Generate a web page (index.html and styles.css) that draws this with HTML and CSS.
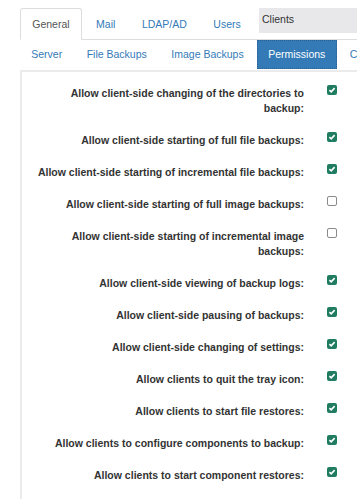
FILE: index.html
```html
<html>
  <head>
    <link rel="stylesheet" href="styles.css">
  </head>
  <body>
    <div class="page">
      <div class="tabs">
        <a class="tab active" href="#">General</a>
        <a class="tab" href="#">Mail</a>
        <a class="tab" href="#">LDAP/AD</a>
        <a class="tab" href="#">Users</a>
        <div class="clients">Clients</div>
      </div>
      <div class="subtabs">
        <a class="subtab" href="#">Server</a>
        <a class="subtab" href="#">File Backups</a>
        <a class="subtab" href="#">Image Backups</a>
        <a class="subtab active" href="#">Permissions</a>
        <a class="subtab" href="#">Client</a>
      </div>
      <div class="panel">
        <div class="row">
          <label class="label">Allow client-side changing of the directories to backup:</label>
          <span class="check on"><svg width="10" height="10" viewBox="0 0 10 10"><polyline points="2.4,5.1 4.2,6.9 7.6,3.1" /></svg></span>
        </div>
        <div class="row">
          <label class="label">Allow client-side starting of full file backups:</label>
          <span class="check on"><svg width="10" height="10" viewBox="0 0 10 10"><polyline points="2.4,5.1 4.2,6.9 7.6,3.1" /></svg></span>
        </div>
        <div class="row">
          <label class="label">Allow client-side starting of incremental file backups:</label>
          <span class="check on"><svg width="10" height="10" viewBox="0 0 10 10"><polyline points="2.4,5.1 4.2,6.9 7.6,3.1" /></svg></span>
        </div>
        <div class="row">
          <label class="label">Allow client-side starting of full image backups:</label>
          <span class="check"></span>
        </div>
        <div class="row">
          <label class="label">Allow client-side starting of incremental image backups:</label>
          <span class="check"></span>
        </div>
        <div class="row">
          <label class="label">Allow client-side viewing of backup logs:</label>
          <span class="check on"><svg width="10" height="10" viewBox="0 0 10 10"><polyline points="2.4,5.1 4.2,6.9 7.6,3.1" /></svg></span>
        </div>
        <div class="row">
          <label class="label">Allow client-side pausing of backups:</label>
          <span class="check on"><svg width="10" height="10" viewBox="0 0 10 10"><polyline points="2.4,5.1 4.2,6.9 7.6,3.1" /></svg></span>
        </div>
        <div class="row">
          <label class="label">Allow client-side changing of settings:</label>
          <span class="check on"><svg width="10" height="10" viewBox="0 0 10 10"><polyline points="2.4,5.1 4.2,6.9 7.6,3.1" /></svg></span>
        </div>
        <div class="row">
          <label class="label">Allow clients to quit the tray icon:</label>
          <span class="check on"><svg width="10" height="10" viewBox="0 0 10 10"><polyline points="2.4,5.1 4.2,6.9 7.6,3.1" /></svg></span>
        </div>
        <div class="row">
          <label class="label">Allow clients to start file restores:</label>
          <span class="check on"><svg width="10" height="10" viewBox="0 0 10 10"><polyline points="2.4,5.1 4.2,6.9 7.6,3.1" /></svg></span>
        </div>
        <div class="row">
          <label class="label">Allow clients to configure components to backup:</label>
          <span class="check on"><svg width="10" height="10" viewBox="0 0 10 10"><polyline points="2.4,5.1 4.2,6.9 7.6,3.1" /></svg></span>
        </div>
        <div class="row">
          <label class="label">Allow clients to start component restores:</label>
          <span class="check on"><svg width="10" height="10" viewBox="0 0 10 10"><polyline points="2.4,5.1 4.2,6.9 7.6,3.1" /></svg></span>
        </div>
      </div>
    </div>
  </body>
</html>
```

FILE: styles.css
```css
body {
  margin: 0;
  background-color: white;
  color: #333;
  font-family: "Liberation Sans", Arial, sans-serif;
  font-size: 10.5px;
  line-height: 15px;
  overflow: hidden;
  height: 499px;
}
a {
  text-decoration: none;
}
.page {
  padding: 8px 0 0 20px;
  width: 337px;
  overflow: hidden;
}
.tabs {
  display: flex;
  align-items: flex-start;
  border-bottom: 1px solid #ddd;
  white-space: nowrap;
}
.tab {
  color: #337ab7;
  padding: 7.5px 11.25px;
  margin-right: 2px;
  margin-bottom: -1px;
  border: 1px solid transparent;
  border-radius: 3px 3px 0 0;
}
.tab.active {
  color: #555;
  background-color: white;
  border-color: #ddd;
  border-bottom-color: white;
}
.clients {
  margin-left: 4px;
  flex: 1;
  height: 25px;
  padding: 4px 3px 0;
  box-sizing: border-box;
  background-color: #e8e8eb;
  color: #333;
}
.subtabs {
  display: flex;
  white-space: nowrap;
  height: 30px;
  overflow: hidden;
}
.subtab {
  color: #337ab7;
  padding: 7px 11.25px;
  margin-right: 2px;
  height: 15px;
}
.subtab.active {
  color: white;
  background-color: #337ab7;
  outline: 1px dotted #2a5f8f;
  outline-offset: -1px;
}
.panel {
  border-top: 2px solid #ebebeb;
  border-left: 2px solid #ebebeb;
  padding: 14px 0 0 10px;
  height: 413px;
  overflow: hidden;
}
.row {
  display: flex;
  align-items: flex-start;
  margin-bottom: 17px;
}
.label {
  width: 272px;
  text-align: right;
  font-weight: bold;
  color: #333;
}
.check {
  display: block;
  width: 10px;
  height: 10px;
  margin: -1px 0 0 23px;
  box-sizing: border-box;
  border: 1px solid #8a8a8a;
  border-radius: 2px;
  background-color: white;
}
.check.on {
  border: none;
  background-color: #1f7c61;
}
.check svg {
  display: block;
}
.check polyline {
  fill: none;
  stroke: white;
  stroke-width: 1.6;
}
```
